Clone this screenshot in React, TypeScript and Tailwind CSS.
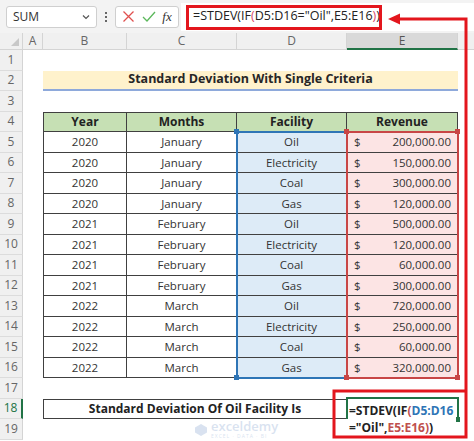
import React from 'react'

const font = { fontFamily: '"Open Sans", "Liberation Sans", sans-serif' }

const rows: [string, string, string, string][] = [
  ['2020', 'January', 'Oil', '200,000.00'],
  ['2020', 'January', 'Electricity', '150,000.00'],
  ['2020', 'January', 'Coal', '300,000.00'],
  ['2020', 'January', 'Gas', '120,000.00'],
  ['2021', 'February', 'Oil', '500,000.00'],
  ['2021', 'February', 'Electricity', '120,000.00'],
  ['2021', 'February', 'Coal', '60,000.00'],
  ['2021', 'February', 'Gas', '300,000.00'],
  ['2022', 'March', 'Oil', '720,000.00'],
  ['2022', 'March', 'Electricity', '250,000.00'],
  ['2022', 'March', 'Coal', '60,000.00'],
  ['2022', 'March', 'Gas', '320,000.00'],
]

function RowHead({ n, active }: { n: number; active?: boolean }) {
  return (
    <div
      className={`flex items-center justify-center bg-[#f0f0f0] text-[12px] border-b border-[#dcdcdc] ${
        active ? 'text-[#217346] border-r-2 border-r-[#217346] bg-[#e1e1e1]' : 'text-[#666] border-r border-r-[#d4d4d4]'
      }`}
    >
      {n}
    </div>
  )
}

function Blank() {
  return <div className="bg-white" />
}

function FormulaBar() {
  return (
    <div className="flex h-[33px] items-center bg-[#f3f3f3]">
      <div className="ml-[6px] flex h-[22px] w-[91px] items-center justify-between rounded-[3px] border border-[#cfcfcf] bg-white pl-[6px] pr-[5px] text-[12px] text-[#333]">
        SUM
        <svg width="10" height="10" viewBox="0 0 10 10">
          <path d="M2 3.5 L5 6.5 L8 3.5" stroke="#555" strokeWidth="1.2" fill="none" />
        </svg>
      </div>
      <div className="mx-[8px] flex flex-col gap-[2px]">
        <span className="h-[2px] w-[2px] bg-[#666]" />
        <span className="h-[2px] w-[2px] bg-[#666]" />
        <span className="h-[2px] w-[2px] bg-[#666]" />
      </div>
      <div className="flex h-[22px] w-[64px] items-center justify-around rounded-[3px] border border-[#cfcfcf] bg-white px-[3px]">
        <svg width="13" height="13" viewBox="0 0 13 13">
          <path d="M1.5 1.5 L11.5 11.5 M11.5 1.5 L1.5 11.5" stroke="#e0504f" strokeWidth="1.3" />
        </svg>
        <svg width="14" height="13" viewBox="0 0 14 13">
          <path d="M1 7 L5 11 L13 2" stroke="#5cb85c" strokeWidth="1.3" fill="none" />
        </svg>
        <span className="text-[13px] italic text-[#333]" style={{ fontFamily: '"Liberation Serif", serif' }}>
          fx
        </span>
      </div>
      <div className="ml-[2px] flex h-[28px] flex-1 items-center bg-white pl-[12px] text-[12.5px] text-[#222]">
        <span>=STDEV(IF</span>
        <span className="text-[#d94a6a]">(</span>
        <span>D5:D16="Oil",E5:E16</span>
        <span className="text-[#d94a6a]">)</span>
        <span>)</span>
      </div>
    </div>
  )
}

export default function App() {
  return (
    <div className="relative h-[441px] w-[474px] overflow-hidden bg-white" style={font}>
      <FormulaBar />

      <div className="grid grid-cols-[23px_20px_84px_110px_110px_111px_16px] grid-rows-[17px_repeat(19,20.5px)]">
        {/* column headers */}
        <div className="relative border-r border-b border-[#d4d4d4] bg-[#f0f0f0]">
          <span className="absolute right-[3px] bottom-[3px] h-0 w-0 border-l-[8px] border-t-[8px] border-l-transparent border-t-transparent border-r-0 border-b-[8px] border-b-[#c8c8c8]" />
        </div>
        {['A', 'B', 'C', 'D'].map((c) => (
          <div key={c} className="flex items-center justify-center border-r border-b border-[#d4d4d4] bg-[#f0f0f0] text-[12px] text-[#666]">
            {c}
          </div>
        ))}
        <div className="flex items-center justify-center border-r border-[#d4d4d4] border-b-2 border-b-[#217346] bg-[#d9d9d9] text-[12px] text-[#555]">
          E
        </div>
        <div className="border-b border-[#d4d4d4] bg-[#f0f0f0]" />

        {/* row 1 */}
        <RowHead n={1} />
        <div className="col-span-6 bg-white" />

        {/* row 2 */}
        <RowHead n={2} />
        <Blank />
        <div className="col-span-4 flex items-center justify-center border-b-2 border-[#8ea9db] bg-[#fff2cc] text-[12.5px] font-bold text-[#262626]">
          Standard Deviation With Single Criteria
        </div>
        <Blank />

        {/* row 3 */}
        <RowHead n={3} />
        <div className="col-span-6 bg-white" />

        {/* row 4 header */}
        <RowHead n={4} />
        <Blank />
        {['Year', 'Months', 'Facility', 'Revenue'].map((h, i) => (
          <div
            key={h}
            className={`flex items-center justify-center border-t border-r border-b border-[#404040] bg-[#c6e0b4] text-[12px] font-bold text-[#222] ${
              i === 0 ? 'border-l' : ''
            }`}
          >
            {h}
          </div>
        ))}
        <Blank />

        {rows.map((r, i) => (
          <React.Fragment key={i}>
            <RowHead n={i + 5} />
            <Blank />
            <div className="flex items-center justify-center border-l border-r border-b border-[#404040] text-[11.5px] text-[#333]">{r[0]}</div>
            <div className="flex items-center justify-center border-r border-b border-[#404040] text-[11.5px] text-[#333]">{r[1]}</div>
            <div className="flex items-center justify-center border-r border-b border-[#404040] bg-[#ddebf7] text-[11.5px] text-[#333]">{r[2]}</div>
            <div className="flex items-center justify-between border-r border-b border-[#404040] bg-[#fce4e4] pl-[7px] pr-[6px] text-[11.5px] text-[#333]">
              <span>$</span>
              <span>{r[3]}</span>
            </div>
            <Blank />
          </React.Fragment>
        ))}

        {/* row 17 */}
        <RowHead n={17} />
        <div className="col-span-6 bg-white" />

        {/* row 18 */}
        <RowHead n={18} active />
        <Blank />
        <div className="col-span-3 flex items-center justify-center border border-[#404040] text-[12px] font-bold text-[#222]">
          Standard Deviation Of Oil Facility Is
        </div>
        <div className="relative overflow-visible">
          <div className="absolute left-[2px] top-[3px] z-10 whitespace-nowrap text-[12px] font-bold leading-[17px] text-[#222]">
            <div>
              =STDEV(IF<span className="text-[#c0504d]">(</span>
              <span className="text-[#2e75b6]">D5:D16</span>
            </div>
            <div>
              ="Oil",<span className="text-[#c0504d]">E5:E16)</span>)
            </div>
          </div>
        </div>
        <Blank />

        {/* row 19 */}
        <RowHead n={19} />
        <div className="col-span-6 bg-white" />
      </div>

      {/* watermark */}
      <div className="pointer-events-none absolute left-[194px] top-[420px] flex items-center gap-[3px] opacity-25">
        <svg width="14" height="14" viewBox="0 0 14 14">
          <path d="M7 1 L13 4.5 L13 9.5 L7 13 L1 9.5 L1 4.5 Z" fill="#6b8fc6" />
        </svg>
        <div className="flex flex-col">
          <span className="text-[13px] leading-[13px] font-semibold text-[#6b8fc6]">exceldemy</span>
          <span className="text-[5px] leading-[6px] tracking-[1px] text-[#6b8fc6]">EXCEL · DATA · BI</span>
        </div>
      </div>

      {/* selection: D5:D16 */}
      <div className="pointer-events-none absolute left-[236px] top-[131px] h-[248px] w-[112px] border-2 border-[#2e75b6]" />
      <span className="absolute left-[234px] top-[129px] h-[5px] w-[5px] bg-[#2e75b6]" />
      <span className="absolute left-[234px] top-[375px] h-[5px] w-[5px] bg-[#2e75b6]" />

      {/* selection: E5:E16 */}
      <div className="pointer-events-none absolute left-[346px] top-[131px] h-[248px] w-[113px] border-2 border-[#c84646]" />
      <span className="absolute left-[344px] top-[129px] h-[5px] w-[5px] bg-[#c84646]" />
      <span className="absolute left-[455px] top-[129px] h-[5px] w-[5px] bg-[#c84646]" />
      <span className="absolute left-[344px] top-[375px] h-[5px] w-[5px] bg-[#c84646]" />
      <span className="absolute left-[455px] top-[375px] h-[5px] w-[5px] bg-[#c84646]" />

      {/* active cell E18 */}
      <div className="pointer-events-none absolute left-[346px] top-[397px] h-[22px] w-[113px] border-2 border-b-0 border-[#217346]" />
      <span className="absolute left-[456px] top-[417px] h-[5px] w-[4px] bg-[#217346]" />

      {/* red annotation */}
      <div className="pointer-events-none absolute left-[186px] top-[5px] h-[25px] w-[196px] border-[3px] border-[#e3161d]" />
      <svg className="pointer-events-none absolute left-0 top-0" width="474" height="441">
        <path d="M398 19 L466 19 L466 437 L334 437 L334 391 L466 391" stroke="#e3161d" strokeWidth="3" fill="none" />
        <path d="M388 19 L400 13.5 L400 24.5 Z" fill="#e3161d" />
      </svg>
    </div>
  )
}
